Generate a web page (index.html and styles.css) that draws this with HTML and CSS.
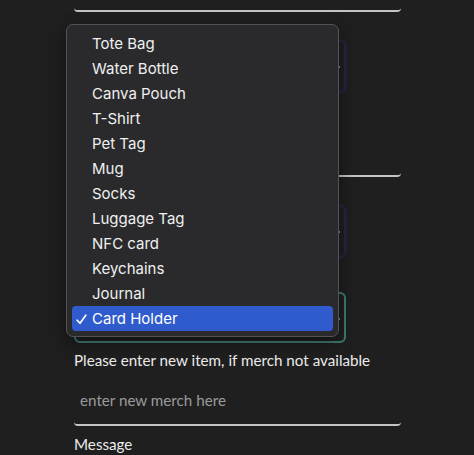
FILE: index.html
```html
<!DOCTYPE html>
<html>
<head>
<meta charset="utf-8">
<link rel="stylesheet" href="styles.css">
</head>
<body>
<div class="page">
  <form class="form">
    <div class="line-input first"></div>
    <div class="select purple"><span class="arrow-dot"></span></div>
    <div class="hidden-label"></div>
    <div class="line-input second"></div>
    <div class="select purple two"><span class="arrow-dot"></span></div>
    <div class="hidden-label short"></div>
    <div class="select teal"><span class="arrow-dot"></span></div>
    <label class="label">Please enter new item, if merch not available</label>
    <div class="text-input"><span class="placeholder">enter new merch here</span></div>
    <label class="label msg">Message</label>
  </form>

  <ul class="menu">
    <li class="item">Tote Bag</li>
    <li class="item">Water Bottle</li>
    <li class="item">Canva Pouch</li>
    <li class="item">T-Shirt</li>
    <li class="item">Pet Tag</li>
    <li class="item">Mug</li>
    <li class="item">Socks</li>
    <li class="item">Luggage Tag</li>
    <li class="item">NFC card</li>
    <li class="item">Keychains</li>
    <li class="item">Journal</li>
    <li class="item selected"><svg class="check" width="11" height="11" viewBox="0 0 11 11"><path d="M1.2 6.2 L4 9.3 L9.8 1.2" fill="none" stroke="#ffffff" stroke-width="1.7" stroke-linecap="round" stroke-linejoin="round"/></svg>Card Holder</li>
  </ul>
</div>
</body>
</html>
```

FILE: styles.css
```css
* { box-sizing: border-box; }
html, body {
  margin: 0;
  padding: 0;
  background: #1f1f1f;
  width: 474px;
  height: 455px;
  overflow: hidden;
}
.page {
  position: relative;
  width: 474px;
  height: 455px;
}
.form {
  display: flex;
  flex-direction: column;
  margin: 0;
  padding-left: 74px;
  width: 401px;
  font-family: Lato, "Liberation Sans", sans-serif;
  color: #ececec;
}
.line-input {
  border-bottom: 2px solid #c4c4c4;
  border-radius: 0 0 4px 4px;
}
.line-input.first { height: 12px; }
.select {
  position: relative;
  width: 272px;
  height: 53px;
  border-radius: 6px;
  border: 2px solid #2c2344;
}
.select.purple { margin-top: 28px; box-shadow: 0 0 3px rgba(80, 50, 140, 0.35); }
.select.two { margin-top: 28px; }
.hidden-label { height: 72px; }
.hidden-label.short { height: 34px; }
.line-input.second { height: 12px; }
.select.teal {
  border-color: #3f7d77;
  height: 51px;
  box-shadow: none;
}
.arrow-dot {
  position: absolute;
  right: 4px;
  top: 24px;
  width: 2px;
  height: 2px;
  background: #8a8a8a;
}
.label {
  display: block;
  margin-top: 8px;
  font-size: 15.2px;
  line-height: 18px;
}
.text-input {
  height: 50px;
  margin-top: 7px;
  padding: 15px 0 0 6px;
  border-bottom: 2px solid #c4c4c4;
  border-radius: 0 0 4px 4px;
  font-size: 15.2px;
  line-height: 18px;
}
.placeholder { color: #9a9a9a; }
.label.msg { margin-top: 9px; }

.menu {
  position: absolute;
  left: 66px;
  top: 24px;
  width: 273px;
  margin: 0;
  padding: 6px 5px 5px;
  list-style: none;
  background: #2a2a2c;
  border: 1px solid #535355;
  border-radius: 7px;
  box-shadow: 0 6px 18px rgba(0, 0, 0, 0.45);
  font-family: Inter, "Noto Sans", sans-serif;
  font-size: 15px;
  color: #f0f0f0;
}
.item {
  height: 25px;
  line-height: 25px;
  padding-left: 20px;
  border-radius: 4px;
  position: relative;
}
.item.selected {
  background: #2f5bcc;
  color: #ffffff;
}
.check {
  position: absolute;
  left: 4px;
  top: 8px;
}
```
